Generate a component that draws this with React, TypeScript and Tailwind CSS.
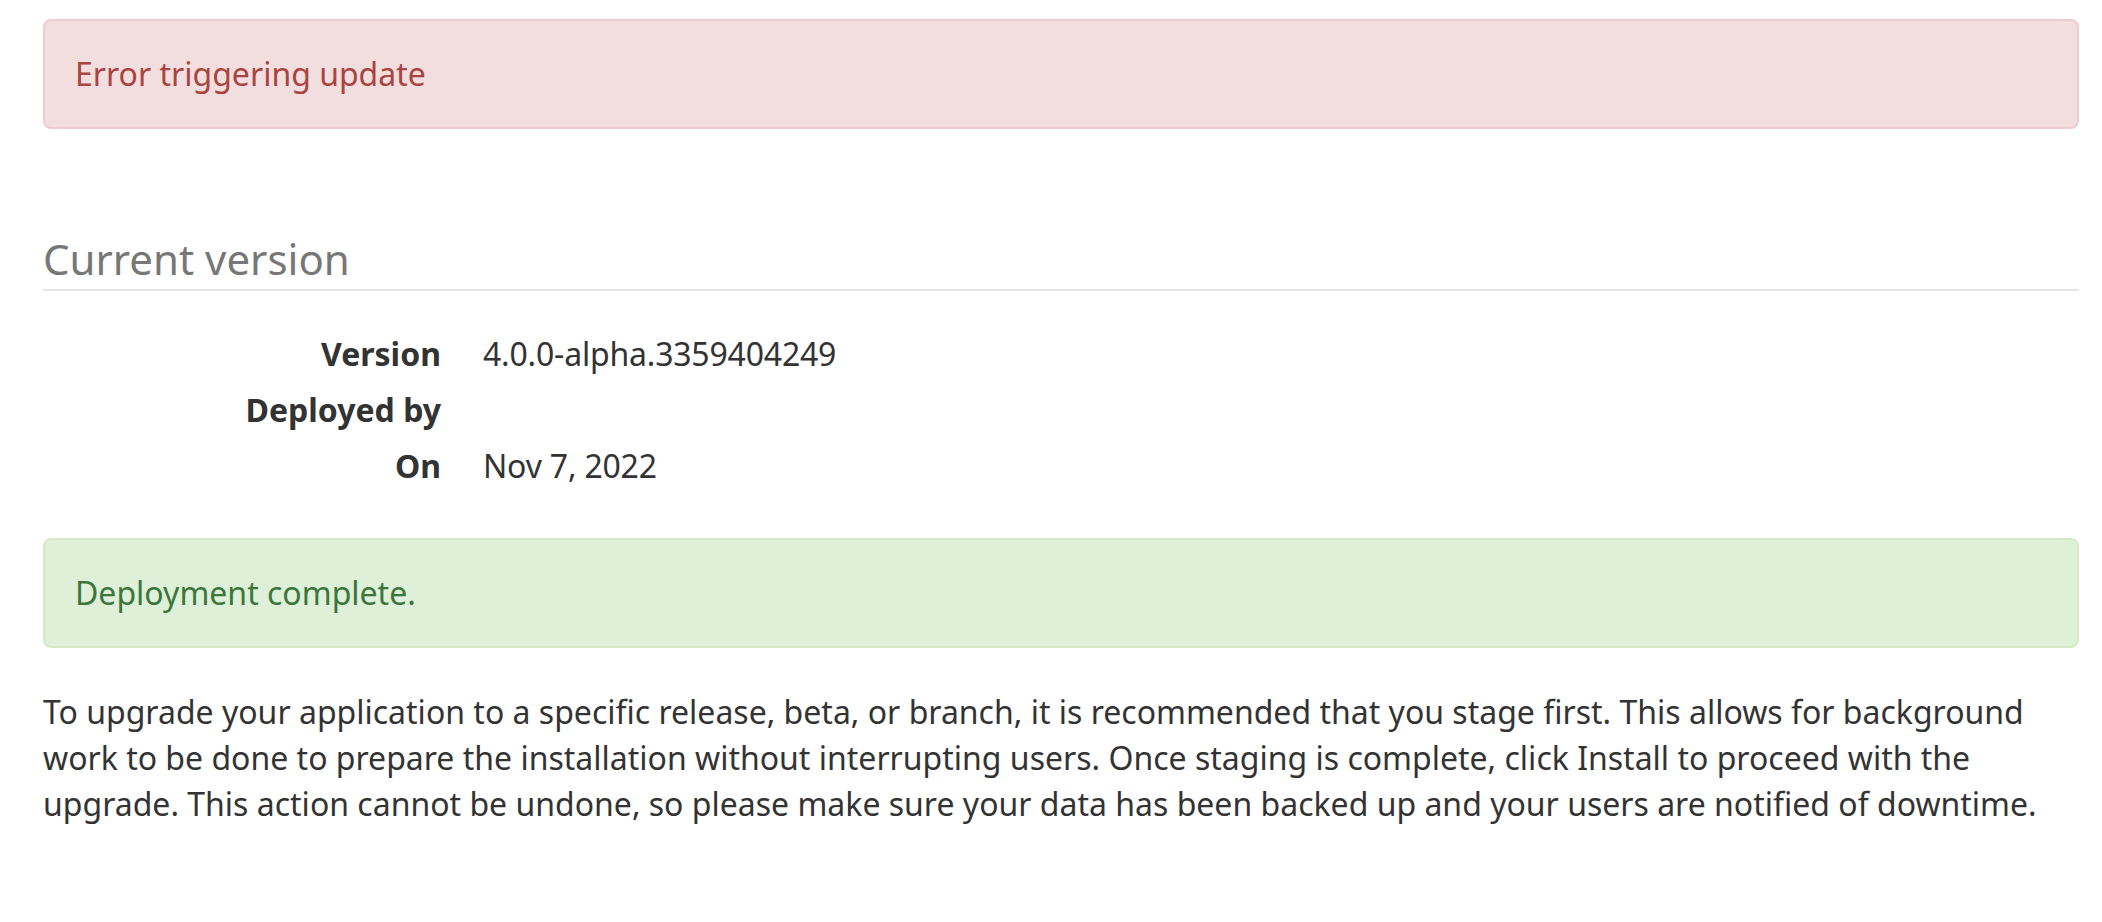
export default function App() {
  const rows = [
    { label: "Version", value: "4.0.0-alpha.3359404249" },
    { label: "Deployed by", value: "" },
    { label: "On", value: "Nov 7, 2022" },
  ];

  return (
    <div className="min-h-[922px] w-full bg-white pl-[43px] pr-[23px] pt-[19px] font-['Noto_Sans',sans-serif] text-[32px] leading-[45.7px] text-[#333]">
      <div className="rounded-[8px] border-2 border-[#ebccd1] bg-[#f2dede] px-[30px] py-[30px] text-[#a94442]">
        Error triggering update
      </div>

      <div className="mt-[107px] border-b-2 border-[#e5e5e5] pb-[8px] text-[42px] leading-[45.7px] text-[#777]">
        Current version
      </div>

      <dl className="mt-[35px]">
        {rows.map((r) => (
          <div key={r.label} className="flex h-[55.7px] items-center">
            <dt className="w-[398px] text-right font-bold">{r.label}</dt>
            <dd className="ml-[42px] tracking-[-0.2px]">{r.value}</dd>
          </div>
        ))}
      </dl>

      <div className="mt-[45px] rounded-[8px] border-2 border-[#d6e9c6] bg-[#dff0d8] px-[30px] py-[30px] text-[#3c763d]">
        Deployment complete.
      </div>

      <p className="mt-[41px]">
        To upgrade your application to a specific release, beta, or branch, it is recommended that you stage first. This
        allows for background work to be done to prepare the installation without interrupting users. Once staging is
        complete, click Install to proceed with the upgrade. This action cannot be undone, so please make sure your data
        has been backed up and your users are notified of downtime.
      </p>
    </div>
  );
}
